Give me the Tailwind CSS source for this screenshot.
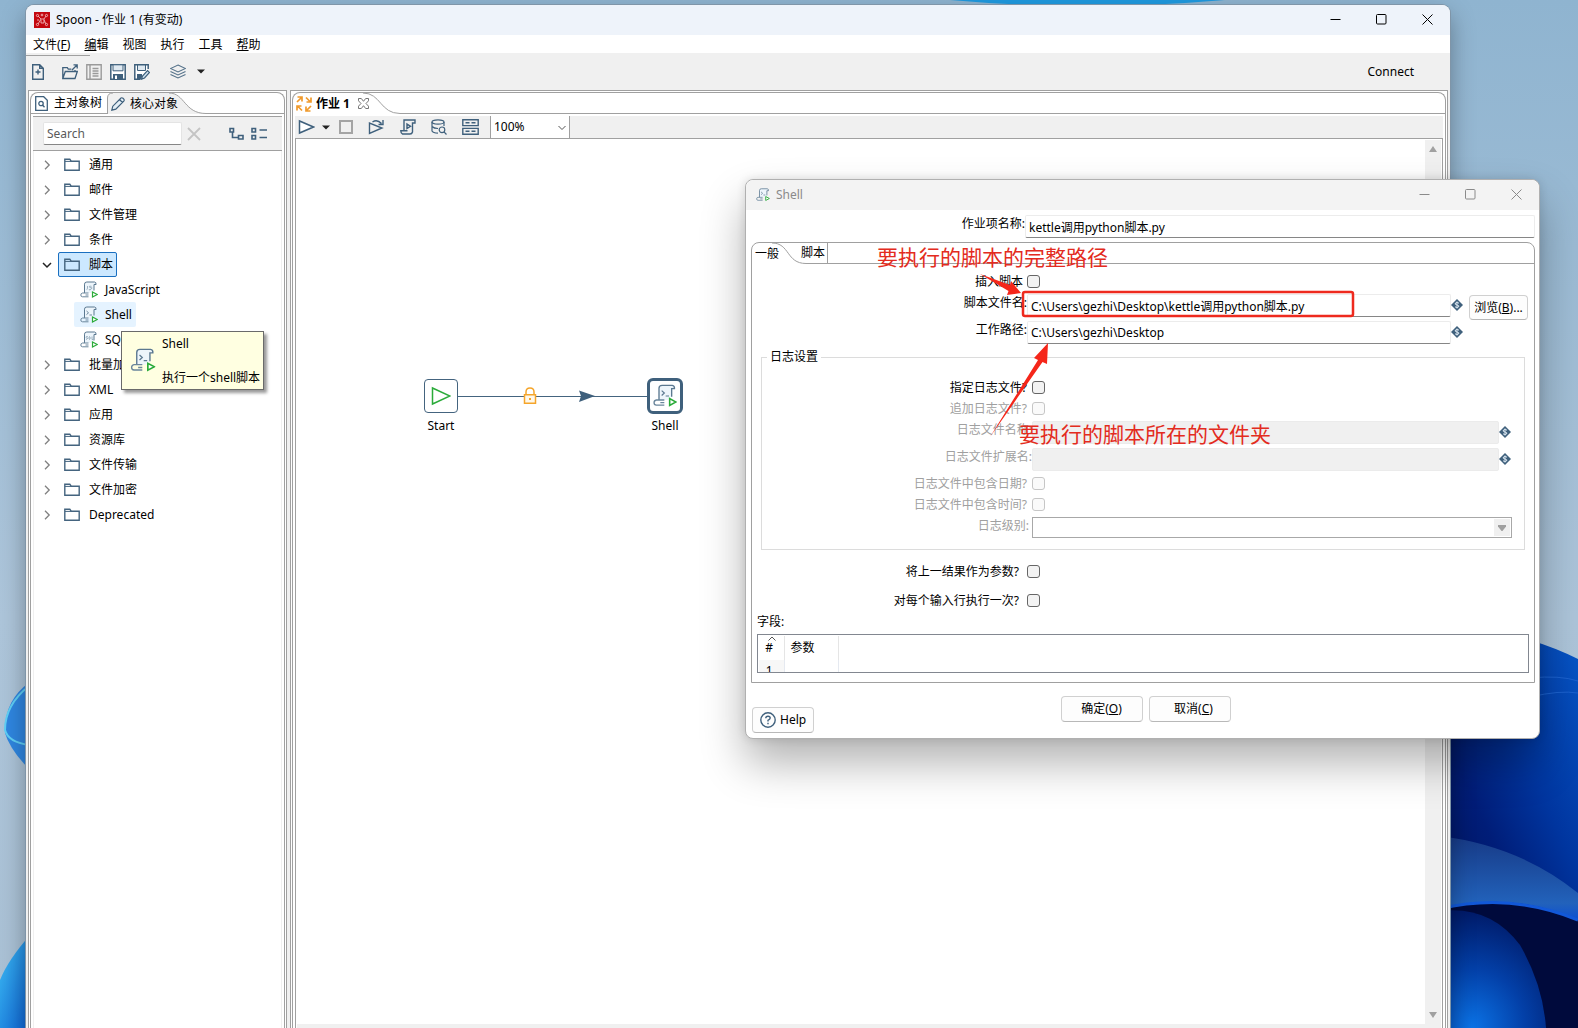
<!DOCTYPE html>
<html lang="zh-CN">
<head>
<meta charset="utf-8">
<meta name="viewport" content="width=device-width, initial-scale=1">
<title>Spoon - 作业 1 (有变动)</title>
<script src="https://cdn.jsdelivr.net/npm/@tailwindcss/browser@4"></script>
</head>
<body class="relative h-screen overflow-hidden bg-[#9bbad3] font-['Noto_Sans','Noto_Sans_CJK_SC',sans-serif] text-xs leading-4 text-black">

<!-- Shared icons -->
<svg class="hidden" aria-hidden="true">
  <symbol id="folder" viewBox="0 0 16 16"><path d="M.8 13.200V2.200h5l1.400 2h8v9z" fill="none" stroke="#44647f" stroke-width="1.400"/><path d="M1 4.400h6" stroke="#44647f"/></symbol>
  <symbol id="scroll" viewBox="0 0 18 18"><path d="M4.500 12V3.200Q4.500 1 6.800 1H14.500Q16.300 1.200 16.100 3.500H14V9.500L11 12z" fill="#edf5fb"/><path d="M4.500 12V3.200Q4.500 1 6.800 1H14.500Q16.300 1.200 16.100 3.500H14V9.500" fill="none" stroke="#5b7890" stroke-width="1"/><path d="M8.500 12H2.500Q.8 12.300.8 14T2.500 15.800H8.500M5.500 14H8.500" fill="none" stroke="#6a869c" stroke-width="1"/><path d="M12.500 11V16L17.200 13.500z" fill="#fff" stroke="#2bab3a" stroke-width="1.200"/></symbol>
  <symbol id="prompt" viewBox="0 0 18 18"><path d="M6.500 5l2 1.800-2 1.800M9.500 9h2.500" fill="none" stroke="#5b7890" stroke-width=".9"/></symbol>
  <symbol id="right" viewBox="0 0 10 10"><path d="M3 .8 7.200 5 3 9.200" fill="none" stroke="#808080" stroke-width="1.300"/></symbol>
  <symbol id="var" viewBox="0 0 12 12"><path d="M6 0l6 6-6 6-6-6z" fill="#3f607c"/><path d="M8 4.200Q6 2.800 4.500 4T6 6 7.500 8 4 7.800M6 2.500v7" fill="none" stroke="#dce8f2" stroke-width="1"/></symbol>
  <symbol id="caret" viewBox="0 0 8 5"><path d="M0 .5h8L4 4.500z" fill="#222"/></symbol>
</svg>

<!-- Wallpaper -->
<svg class="absolute inset-0 h-full w-full" viewBox="0 0 1578 1028" preserveAspectRatio="none" aria-hidden="true">
  <defs>
    <linearGradient id="sky" x1="0" y1="0" x2="0" y2="1"><stop offset="0" stop-color="#8fb4d0"/><stop offset=".6" stop-color="#adc5da"/><stop offset="1" stop-color="#a9c0d4"/></linearGradient>
    <linearGradient id="deep" x1="1" y1="0" x2="0" y2="1"><stop offset="0" stop-color="#0756c8"/><stop offset=".3" stop-color="#00359f"/><stop offset=".5" stop-color="#001d78"/><stop offset="1" stop-color="#000b40"/></linearGradient>
    <linearGradient id="mid" x1="0" y1="0" x2="0" y2="1"><stop offset="0" stop-color="#173a86"/><stop offset=".8" stop-color="#2262bb"/><stop offset="1" stop-color="#0d50d2"/></linearGradient>
    <radialGradient id="low" cx=".3" cy="1" r="1"><stop offset="0" stop-color="#0b73e6"/><stop offset=".5" stop-color="#0340a8"/><stop offset="1" stop-color="#001a68"/></radialGradient>
    <linearGradient id="petal" x1="0" y1="0" x2="1" y2="1"><stop offset="0" stop-color="#3fc0f5"/><stop offset="1" stop-color="#0c5fd2"/></linearGradient>
  </defs>
  <rect width="1578" height="1028" fill="url(#sky)"/>
  <path d="M950 0Q1085 12 1225 0z" fill="#1f9ae0"/>
  <path d="M1400 640H1530Q1556 648 1578 659V1028H1400z" fill="url(#deep)"/>
  <path d="M1530 678Q1560 675 1578 681M1530 697Q1560 690 1578 693" fill="none" stroke="#1c62cf"/>
  <path d="M1440 836Q1520 846 1578 893V920Q1500 895 1440 910z" fill="url(#mid)"/>
  <path d="M1440 909Q1510 890 1578 920V1028H1440z" fill="#000a3c"/>
  <path d="M1440 909Q1510 892 1578 920" fill="none" stroke="#1258d8" stroke-width="3"/>
  <path d="M1440 911Q1490 905 1520 945 1543 985 1546 1028H1440z" fill="url(#low)"/>
  <path d="M30 682Q4 700 5 733 10 750 30 770z" fill="#2f86e0"/>
  <path d="M29 686Q5 705 5 730 8 742 29 745" fill="none" stroke="#5fcff5" stroke-width="2"/>
  <path d="M30 935Q8 960 0 980V1028H30z" fill="url(#petal)"/>
</svg>

<!-- Main window -->
<main class="absolute top-[5px] right-[128px] bottom-0 left-[26px] flex flex-col overflow-hidden rounded-t-lg bg-[#f0f0f0] shadow-[0_0_0_1px_#7f95a8,0_10px_24px_rgba(0,0,0,0.35)]">
  <header class="flex h-[30px] shrink-0 items-center bg-[#eef3fa] pl-2">
    <svg class="mr-[6px] h-4 w-4" viewBox="0 0 16 16"><path d="M0 0h16v16H0z" fill="#c4070f"/><path d="M4 4l3 3h3l2-3M7 7l-3 5M10 8l2 4M7 8v3h3V7M5 8H3" fill="none" stroke="#f6c9cb" stroke-width=".8"/><g fill="#c4070f" stroke="#f6c9cb" stroke-width=".8"><circle cx="3.500" cy="3.500" r="1.100"/><circle cx="8" cy="3" r=".9"/><circle cx="12.500" cy="3.500" r="1.100"/><circle cx="3.500" cy="12.500" r="1.100"/><circle cx="12.500" cy="12.500" r="1.100"/></g></svg>
    <h1 class="flex-1">Spoon - 作业 1 (有变动)</h1>
    <button class="grid h-full w-[46px] place-items-center" aria-label="最小化"><svg class="h-[11px] w-[11px]" viewBox="0 0 11 11"><path d="M.5 4.500h10" stroke="#000"/></svg></button>
    <button class="grid h-full w-[46px] place-items-center pb-px" aria-label="最大化"><svg class="h-[11px] w-[11px]" viewBox="0 0 11 11"><rect x=".5" y=".5" width="9.500" height="9.500" rx="1" fill="none" stroke="#000"/></svg></button>
    <button class="grid h-full w-[46px] place-items-center pb-px" aria-label="关闭"><svg class="h-[11px] w-[11px]" viewBox="0 0 11 11"><path d="M.5.5l10 10M10.500.5l-10 10" stroke="#000"/></svg></button>
  </header>

  <nav class="flex h-[18px] shrink-0 items-center gap-[14px] bg-white pt-px pl-[7px]">
    <button>文件(<u>F</u>)</button><button><u>编</u>辑</button><button>视图</button><button>执行</button><button>工具</button><button><u>帮</u>助</button>
  </nav>

  <div class="relative flex h-[37px] shrink-0 items-center pl-1">
    <div class="absolute top-0.5 left-0 h-px w-16 bg-[#a0a0a0]"></div>
    <button class="mr-4" aria-label="新建"><svg class="h-4 w-4" viewBox="0 0 16 16" fill="none" stroke="#3f607c" stroke-width="1.400"><path d="M2.700.7h7l3.600 3.600v11H2.700zM9.700.7v3.600h3.600M8 5.500v5M5.500 8h5"/></svg></button>
    <button class="mr-2" aria-label="打开"><svg class="h-4 w-4" viewBox="0 0 16 16" fill="none" stroke="#3f607c" stroke-width="1.300"><path d="M.8 14.500V3.700h4.500l1 1.500h3M.8 14.500l2.500-7h12l-2.300 7zM13 7.500V6M10 6l5-5M11.500.8h3.700v3.700"/></svg></button>
    <button class="mr-2" aria-label="探索资源库"><svg class="h-4 w-4" viewBox="0 0 16 16" fill="none" stroke="#9a9a9a" stroke-width="1.400"><path d="M.8.8h14.400v14.400H.8zM4 .8v14.400M6.500 4.500h6M6.500 7h6M6.500 9.500h6M6.500 12h6"/></svg></button>
    <button class="mr-2" aria-label="保存"><svg class="h-4 w-4" viewBox="0 0 16 16"><path d="M.8.8h14.400v14.400H.8z" fill="#fff" stroke="#3f607c" stroke-width="1.500"/><path d="M3 .8h10v6H3z" fill="#dfe9f1" stroke="#3f607c"/><path d="M3 10h10v5.500H3z" fill="#3f607c"/><path d="M5 11.500h2V15H5z" fill="#fff"/></svg></button>
    <button class="mr-5" aria-label="另存为"><svg class="h-4 w-4" viewBox="0 0 16 16"><path d="M6 15.200H.8V.8h13.400V5" fill="#fff" stroke="#3f607c" stroke-width="1.500"/><path d="M3.500 1h8v5.500h-8z" fill="#dfe9f1" stroke="#3f607c"/><path d="M3 10h5v3l-1 2.500H3z" fill="#3f607c"/><path d="M7.500 15.200l1-3.200 5-5.500 2 2-5 5.500z" fill="#cfe2ef" stroke="#3f607c" stroke-width="1.200"/></svg></button>
    <button class="flex items-center gap-[11px]" aria-label="透视图"><svg class="h-4 w-4" viewBox="0 0 16 16" fill="none" stroke="#55728a" stroke-width="1.100"><path d="M8 1l7.500 3.500L8 8 .5 4.500zM.5 7.500L8 11l7.500-3.500M.5 10.500L8 14l7.500-3.500"/></svg><svg class="h-[5px] w-2"><use href="#caret"/></svg></button>
    <button class="mr-9 ml-auto pt-px">Connect</button>
  </div>

  <div class="flex min-h-0 flex-1 gap-[3px] pr-0.5 pl-0.5">

    <!-- Object explorer -->
    <aside class="flex w-[259px] shrink-0 flex-col border border-b-0 border-[#a0a0a0] bg-white px-px pt-px">
      <div class="flex min-h-0 flex-1 flex-col rounded-t-lg border border-b-0 border-[#a0a0a0]">
        <div class="flex h-[21px] shrink-0" role="tablist">
          <button role="tab" aria-selected="false" class="flex w-[76px] items-center gap-[6px] border-b border-[#a0a0a0] pl-1 whitespace-nowrap"><svg class="h-[15px] w-[13px] shrink-0" viewBox="0 0 13 15" fill="none" stroke="#3f607c" stroke-width="1.300"><path d="M.7.7h8l3.600 3.600v10H.7z"/><circle cx="6" cy="7.500" r="2.200"/><path d="M7.500 9l2 2.200"/></svg>主对象树</button>
          <button role="tab" aria-selected="true" class="relative flex w-[99px] items-center gap-[5px] pl-[4px] whitespace-nowrap">
            <svg class="absolute inset-0 h-[21px] w-[99px]" viewBox="0 0 99 21"><path d="M.5 21V5Q.5 0 6 0H62C78 0 77 20.500 98 20.500L99 21z" fill="#f0f0f0"/><path d="M.5 21V5Q.5 0 6 0M62 0C78 0 77 20.500 99 20.500" fill="none" stroke="#a0a0a0"/></svg>
            <svg class="relative h-[14px] w-[14px] shrink-0" viewBox="0 0 14 14" fill="#e4eef5" stroke="#3f607c" stroke-width="1.200"><path d="M.8 13.200l1-4L10 1q1-.6 2 .3l.8.800q.8 1 0 2L4.800 12.200zM8.500 2.500l3 3"/></svg><span class="relative">核心对象</span></button>
          <div class="flex-1 border-b border-[#a0a0a0]"></div>
        </div>
        <div class="mx-0.5 mt-0.5 flex h-[35px] shrink-0 items-center border-y border-[#a0a0a0] bg-[#f0f0f0] pl-[10px]">
          <input type="text" placeholder="Search" aria-label="搜索" class="h-[23px] w-[139px] rounded-xs border border-[#e4e4e4] border-b-[#868686] bg-white px-[3px] placeholder:text-[#5a5a5a]">
          <button class="ml-1" aria-label="清除"><svg class="h-4 w-4" viewBox="0 0 16 16"><path d="M2 2l12 12M14 2L2 14" stroke="#c4c4c4" stroke-width="1.800"/></svg></button>
          <button class="ml-[27px]" aria-label="展开全部"><svg class="h-[14px] w-[15px]" viewBox="0 0 15 14" fill="none" stroke="#3f607c" stroke-width="1.600"><path d="M1 1.500h3.500V5H1zM9.500 8.500H14V12H9.500zM3.500 5V10.500h6"/></svg></button>
          <button class="ml-[7px]" aria-label="收起全部"><svg class="h-[14px] w-[17px]" viewBox="0 0 17 14" fill="none" stroke="#3f607c" stroke-width="1.600"><path d="M1 1.500h3.500V5H1zM1 8.500h3.500V12H1zM8.500 3H16M8.500 10.500H16"/></svg></button>
        </div>
        <ul class="mx-0.5 flex-1 border-x border-[#f0f0f0] pt-px">
          <li class="flex h-[25px] items-center pl-2"><svg class="mr-[7px] h-[10px] w-[10px]"><use href="#right"/></svg><span class="flex h-full items-center gap-[9px] px-[5px]"><svg class="h-4 w-4"><use href="#folder"/></svg>通用</span></li>
          <li class="flex h-[25px] items-center pl-2"><svg class="mr-[7px] h-[10px] w-[10px]"><use href="#right"/></svg><span class="flex h-full items-center gap-[9px] px-[5px]"><svg class="h-4 w-4"><use href="#folder"/></svg>邮件</span></li>
          <li class="flex h-[25px] items-center pl-2"><svg class="mr-[7px] h-[10px] w-[10px]"><use href="#right"/></svg><span class="flex h-full items-center gap-[9px] px-[5px]"><svg class="h-4 w-4"><use href="#folder"/></svg>文件管理</span></li>
          <li class="flex h-[25px] items-center pl-2"><svg class="mr-[7px] h-[10px] w-[10px]"><use href="#right"/></svg><span class="flex h-full items-center gap-[9px] px-[5px]"><svg class="h-4 w-4"><use href="#folder"/></svg>条件</span></li>
          <li>
            <div class="flex h-[25px] items-center pl-2"><svg class="mr-[6px] h-[10px] w-[10px]" viewBox="0 0 10 10"><path d="M1 3l4 4 4-4" fill="none" stroke="#222" stroke-width="1.500"/></svg><span class="flex h-full items-center gap-[9px] rounded-xs border border-[#1a6fc0] bg-[#cce8ff] pr-[3px] pl-[5px]"><svg class="h-4 w-4"><use href="#folder"/></svg>脚本</span></div>
            <ul class="pl-[40px]">
              <li class="flex h-[25px] items-center gap-[7px] pl-[6px]"><svg class="h-[18px] w-[18px]" viewBox="0 0 18 18"><use href="#scroll"/><path d="M7.500 5v2.500q0 1-1 .8M11.500 5.300q-2.500-.6-2.200.6t2 .8-.2 1.500-2-.2" fill="none" stroke="#8aa1b3" stroke-width=".8"/></svg>JavaScript</li>
              <li class="flex h-[25px]"><span class="flex items-center gap-[7px] rounded-xs bg-[#e5f3ff] pr-[4px] pl-[6px]"><svg class="h-[18px] w-[18px]"><use href="#scroll"/><use href="#prompt"/></svg>Shell</span></li>
              <li class="flex h-[25px] items-center gap-[7px] pl-[6px]"><svg class="h-[18px] w-[18px]" viewBox="0 0 18 18"><use href="#scroll"/><path d="M7.800 5.500q-2-.4-1.700.8t1.500.8-1.600 1.500M9.500 5.500q-1.500 1.500 0 3 1.700-1.500 0-3M12 5.500v3h1.200" fill="none" stroke="#8aa1b3" stroke-width=".8"/></svg>SQL</li>
            </ul>
          </li>
          <li class="flex h-[25px] items-center pl-2"><svg class="mr-[7px] h-[10px] w-[10px]"><use href="#right"/></svg><span class="flex h-full items-center gap-[9px] px-[5px]"><svg class="h-4 w-4"><use href="#folder"/></svg>批量加载</span></li>
          <li class="flex h-[25px] items-center pl-2"><svg class="mr-[7px] h-[10px] w-[10px]"><use href="#right"/></svg><span class="flex h-full items-center gap-[9px] px-[5px]"><svg class="h-4 w-4"><use href="#folder"/></svg>XML</span></li>
          <li class="flex h-[25px] items-center pl-2"><svg class="mr-[7px] h-[10px] w-[10px]"><use href="#right"/></svg><span class="flex h-full items-center gap-[9px] px-[5px]"><svg class="h-4 w-4"><use href="#folder"/></svg>应用</span></li>
          <li class="flex h-[25px] items-center pl-2"><svg class="mr-[7px] h-[10px] w-[10px]"><use href="#right"/></svg><span class="flex h-full items-center gap-[9px] px-[5px]"><svg class="h-4 w-4"><use href="#folder"/></svg>资源库</span></li>
          <li class="flex h-[25px] items-center pl-2"><svg class="mr-[7px] h-[10px] w-[10px]"><use href="#right"/></svg><span class="flex h-full items-center gap-[9px] px-[5px]"><svg class="h-4 w-4"><use href="#folder"/></svg>文件传输</span></li>
          <li class="flex h-[25px] items-center pl-2"><svg class="mr-[7px] h-[10px] w-[10px]"><use href="#right"/></svg><span class="flex h-full items-center gap-[9px] px-[5px]"><svg class="h-4 w-4"><use href="#folder"/></svg>文件加密</span></li>
          <li class="flex h-[25px] items-center pl-2"><svg class="mr-[7px] h-[10px] w-[10px]"><use href="#right"/></svg><span class="flex h-full items-center gap-[9px] px-[5px]"><svg class="h-4 w-4"><use href="#folder"/></svg>Deprecated</span></li>
        </ul>
      </div>
    </aside>

    <!-- Job editor -->
    <section class="flex min-w-0 flex-1 flex-col border border-b-0 border-[#a0a0a0] bg-white px-px pt-px">
      <div class="flex min-h-0 flex-1 flex-col rounded-t-lg border border-b-0 border-[#a0a0a0]">
        <div class="flex h-[21px] shrink-0" role="tablist">
          <div class="relative flex w-[107px] items-center pl-[3px]">
            <svg class="absolute inset-0 h-[21px] w-[107px]" viewBox="0 0 107 21"><path d="M70 0C88 0 87 20.500 107 20.500" fill="none" stroke="#a0a0a0"/></svg>
            <svg class="mr-[4px] h-4 w-4 shrink-0" viewBox="0 0 16 16" fill="none" stroke="#f09a2c" stroke-width="1.700"><path d="M1 6l4.500-4.500M1.500 1H6v4.500M10 1.500L14.500 6M15 1.500V6h-4.500M15 10l-4.500 4.500M14.500 15H10v-4.500M6 14.500L1.500 10M1 14.500V10h4.500"/></svg>
            <button role="tab" aria-selected="true" class="font-bold whitespace-nowrap">作业 1</button>
            <button class="relative ml-2" aria-label="关闭标签"><svg class="h-[11px] w-[11px]" viewBox="0 0 11 11" fill="none" stroke="#666" stroke-width=".9"><path d="M.5.5h2.800l2.200 2.800L7.700.5h2.800v2.300L8 5.500l2.500 2.700v2.300H7.700L5.500 7.700l-2.200 2.800H.5V8.200L3 5.500.5 2.800z"/></svg></button>
          </div>
          <div class="flex-1 border-b border-[#a0a0a0]"></div>
        </div>
        <div class="mx-0.5 mt-0.5 flex h-[22px] shrink-0 items-center bg-[#f0f0f0] pl-[3px]">
          <button class="flex items-center gap-[7px]" aria-label="运行"><svg class="h-4 w-[17px]" viewBox="0 0 17 16"><path d="M1.500 2v12l14-6z" fill="#fff" stroke="#3f607c" stroke-width="1.500"/></svg><svg class="h-[5px] w-2"><use href="#caret"/></svg></button>
          <button class="ml-[9px] h-[14px] w-[14px] border-2 border-[#a4a4a4]" aria-label="停止"></button>
          <button class="ml-[15px]" aria-label="重放"><svg class="h-4 w-[17px]" viewBox="0 0 17 16" fill="none" stroke="#3f607c" stroke-width="1.400"><path d="M1.500 4v10.500L14 9zM4.500 3Q9-.2 13.500 4.500M15 1v4.500H10.500"/></svg></button>
          <button class="ml-[15px]" aria-label="查看脚本"><svg class="h-4 w-4" viewBox="0 0 16 16" fill="none" stroke="#3f607c" stroke-width="1.400"><path d="M4 11V1h11v3h-2.500v9q-.5 2-2.500 2H2.500Q.8 14.500.8 11.800H7.500M7 5v4.500l3.500-2.200z"/></svg></button>
          <button class="ml-[15px]" aria-label="浏览数据库"><svg class="h-4 w-4" viewBox="0 0 16 16" fill="none" stroke="#3f607c" stroke-width="1.200"><ellipse cx="7" cy="3" rx="6" ry="2.200"/><path d="M1 3v9q1 2 6 2.200M13 3v4M1 7.500Q3 9.500 7 9.500"/><circle cx="11" cy="10.800" r="2.800"/><path d="M13 12.800l2.500 2.700"/></svg></button>
          <button class="ml-[15px]" aria-label="显示结果"><svg class="h-4 w-[17px]" viewBox="0 0 17 16" fill="none" stroke="#3f607c" stroke-width="1.400"><path d="M.8.800h15.400v5.800H.8zM.8 9.400h15.400v5.800H.8zM3.500 3.700h4M9.500 3.700h4M3.500 12.300h4M9.500 12.300h4"/></svg></button>
          <div class="relative ml-[11px] h-full w-[80px]">
            <select aria-label="缩放" class="h-full w-full appearance-none border-x border-[#a0a0a0] bg-white pl-[3px]"><option>100%</option></select>
            <svg class="pointer-events-none absolute top-2 right-[4px] h-2 w-2" viewBox="0 0 8 8"><path d="M.5 2L4 5.500 7.500 2" fill="none" stroke="#555"/></svg>
          </div>
        </div>
        <div class="mx-0.5 flex min-h-0 flex-1 flex-col border border-b-0 border-[#a0a0a0]">
          <div class="flex min-h-0 flex-1">
            <!-- Job diagram -->
            <div class="relative flex-1">
              <svg class="absolute top-[240px] left-[162px] h-[34px] w-[190px]" viewBox="0 0 190 34"><path d="M0 17.500h190" stroke="#44647f"/><path d="M121 11.500l16 5.500-16 6 2-6z" fill="#3f607c"/><path d="M68 16v-3q0-4 4-4t4 4v3" fill="none" stroke="#f5a52a" stroke-width="1.500"/><path d="M66.500 15.800h11v8.500h-11z" fill="#fff8ea" stroke="#f5a52a" stroke-width="1.500"/><path d="M71 19h2v2h-2z" fill="#f5a52a"/></svg>
              <figure class="absolute top-[240px] left-[128px] flex w-[34px] flex-col items-center">
                <div class="grid h-[34px] w-[34px] place-items-center rounded border border-[#44647f] bg-white"><svg class="h-5 w-5" viewBox="0 0 20 20"><path d="M1.500 2v16L19 10z" fill="#fff" stroke="#2bab3a" stroke-width="1.500"/></svg></div>
                <figcaption class="mt-[5px]">Start</figcaption>
              </figure>
              <figure class="absolute top-[239px] left-[351px] flex w-[36px] flex-col items-center">
                <div class="grid h-[36px] w-[36px] place-items-center rounded-md border-3 border-[#3f607c] bg-white"><svg class="h-6 w-6" viewBox="0 0 18 18"><use href="#scroll"/><use href="#prompt"/></svg></div>
                <figcaption class="mt-1">Shell</figcaption>
              </figure>
            </div>
            <div class="mx-px mt-px flex w-4 flex-col items-center justify-between bg-[#f0f0f0] py-[6px]">
              <svg class="h-[6px] w-2" viewBox="0 0 8 6"><path d="M4 0l4 6H0z" fill="#a0a0a0"/></svg>
              <svg class="h-[6px] w-2" viewBox="0 0 8 6"><path d="M0 0h8L4 6z" fill="#a0a0a0"/></svg>
            </div>
          </div>
          <div class="mx-px h-[4px] bg-[#f0f0f0]"></div>
        </div>
      </div>
    </section>
  </div>
</main>

<!-- Tree tooltip -->
<div role="tooltip" class="absolute top-[331px] left-[121px] flex h-[59px] w-[143px] items-center gap-1 border border-[#6a6a6a] bg-[#ffffe1] pl-[8px] whitespace-nowrap shadow-[3px_3px_3px_rgba(0,0,0,0.4)]">
  <svg class="h-[25px] w-[26px] shrink-0" viewBox="0 0 18 18"><use href="#scroll"/><use href="#prompt"/></svg>
  <div class="flex flex-col gap-[18px] pl-[2px]"><span>Shell</span><span>执行一个shell脚本</span></div>
</div>

<!-- Shell job entry dialog -->
<section role="dialog" aria-label="Shell" class="absolute top-[179px] right-[38px] w-[795px] rounded-lg border border-[#b0b0b0] bg-white pb-[5px] shadow-[0_24px_44px_rgba(0,0,0,0.3),0_0_10px_rgba(0,0,0,0.12)]">
  <header class="flex h-[30px] items-center rounded-t-lg bg-[#f3f3f3] pl-[10px] text-[#8a8a8a]">
    <svg class="mr-[6px] h-[14px] w-[14px]" viewBox="0 0 18 18"><use href="#scroll"/><use href="#prompt"/></svg>
    <h2 class="flex-1">Shell</h2>
    <button class="grid h-full w-[46px] place-items-center" aria-label="最小化"><svg class="h-[11px] w-[11px]" viewBox="0 0 11 11"><path d="M.5 4.500h10" stroke="#8a8a8a"/></svg></button>
    <button class="grid h-full w-[46px] place-items-center pb-px" aria-label="最大化"><svg class="h-[11px] w-[11px]" viewBox="0 0 11 11"><rect x=".5" y=".5" width="9.500" height="9.500" rx="1" fill="none" stroke="#8a8a8a"/></svg></button>
    <button class="grid h-full w-[46px] place-items-center pb-px" aria-label="关闭"><svg class="h-[11px] w-[11px]" viewBox="0 0 11 11"><path d="M.5.5l10 10M10.500.5l-10 10" stroke="#8a8a8a"/></svg></button>
  </header>

  <form>
    <div class="flex pt-[5px] pr-[4px]">
      <label for="name" class="w-[279px] pt-px text-right">作业项名称:</label>
      <input id="name" type="text" value="kettle调用python脚本.py" class="h-[23px] min-w-0 flex-1 rounded-xs border border-[#ececec] border-b-[#868686] bg-white px-[3px]">
    </div>

    <div class="mt-1 mr-[4px] ml-[5px] rounded-t-lg border border-[#a0a0a0] pb-[9px]">
      <div class="flex h-[21px]" role="tablist">
        <button type="button" role="tab" aria-selected="true" class="relative flex w-[54px] items-center pl-[3px]"><svg class="absolute inset-0 h-[21px] w-[54px]" viewBox="0 0 54 21"><path d="M20 0C38 0 34 20.500 54 20.500" fill="none" stroke="#a0a0a0"/></svg>一般</button>
        <button type="button" role="tab" aria-selected="false" class="w-[21px] flex-none border-b border-[#a0a0a0]"><span class="-ml-[7px] whitespace-nowrap">脚本</span></button>
        <div class="flex-1 border-b border-l border-[#a0a0a0]"></div>
      </div>

      <div class="mt-[7px] flex h-[21px] items-center"><label for="insert" class="w-[275px] pr-[4px] text-right">插入脚本</label><input id="insert" type="checkbox" class="h-[13px] w-[13px] appearance-none rounded-[3px] border border-[#666] bg-[#f3f3f3]"></div>
      <div class="flex h-[27px] pr-[6px]">
        <label for="file" class="h-[22px] w-[275px] text-right leading-[22px]">脚本文件名:</label>
        <input id="file" type="text" value="C:\Users\gezhi\Desktop\kettle调用python脚本.py" class="mt-0.5 h-[23px] min-w-0 flex-1 rounded-xs border border-[#ececec] border-b-[#868686] bg-white px-[3px]">
        <svg class="mt-[7px] h-3 w-3"><use href="#var"/></svg>
        <button type="button" class="mt-[3px] ml-[6px] h-[25px] w-[59px] rounded border border-[#d0d0d0] border-b-[#b8b8b8] bg-[#fdfdfd] whitespace-nowrap">浏览(<u>B</u>)...</button>
      </div>
      <div class="flex h-[27px] pr-[71px]">
        <label for="dir" class="h-[22px] w-[275px] text-right leading-[22px]">工作路径:</label>
        <input id="dir" type="text" value="C:\Users\gezhi\Desktop" class="mt-0.5 h-[23px] min-w-0 flex-1 rounded-xs border border-[#ececec] border-b-[#868686] bg-white px-[3px]">
        <svg class="mt-[7px] h-3 w-3"><use href="#var"/></svg>
      </div>

      <fieldset class="mx-[9px] mt-[3px] border border-[#dcdcdc] pb-[11px] text-[#a0a0a0]">
        <legend class="ml-[5px] px-[3px] text-black">日志设置</legend>
        <div class="mt-3 flex h-[21px] items-center text-black"><label for="log" class="w-[270px] pr-[5px] text-right">指定日志文件?</label><input id="log" type="checkbox" class="h-[13px] w-[13px] appearance-none rounded-[3px] border border-[#666] bg-[#f3f3f3]"></div>
        <div class="flex h-[21px] items-center"><label for="append" class="w-[270px] pr-[5px] text-right">追加日志文件?</label><input id="append" type="checkbox" disabled class="h-[13px] w-[13px] appearance-none rounded-[3px] border border-[#c6c6c6] bg-[#fafafa]"></div>
        <div class="flex h-[27px] pr-[13px]"><label for="logname" class="h-[22px] w-[270px] text-right leading-[22px]">日志文件名称:</label><input id="logname" type="text" disabled class="mt-0.5 h-[23px] min-w-0 flex-1 rounded-xs border border-[#ebebeb] bg-[#f0f0f0]"><svg class="mt-[7px] h-3 w-3"><use href="#var"/></svg></div>
        <div class="flex h-[27px] pr-[13px]"><label for="logext" class="h-[22px] w-[270px] text-right leading-[22px]">日志文件扩展名:</label><input id="logext" type="text" disabled class="mt-0.5 h-[23px] min-w-0 flex-1 rounded-xs border border-[#ebebeb] bg-[#f0f0f0]"><svg class="mt-[7px] h-3 w-3"><use href="#var"/></svg></div>
        <div class="flex h-[21px] items-center"><label for="logdate" class="w-[270px] pr-[5px] text-right">日志文件中包含日期?</label><input id="logdate" type="checkbox" disabled class="h-[13px] w-[13px] appearance-none rounded-[3px] border border-[#c6c6c6] bg-[#fafafa]"></div>
        <div class="flex h-[21px] items-center"><label for="logtime" class="w-[270px] pr-[5px] text-right">日志文件中包含时间?</label><input id="logtime" type="checkbox" disabled class="h-[13px] w-[13px] appearance-none rounded-[3px] border border-[#c6c6c6] bg-[#fafafa]"></div>
        <div class="flex pr-[12px]">
          <label for="level" class="h-[22px] w-[270px] pr-[3px] text-right leading-[22px]">日志级别:</label>
          <div class="relative mt-0.5 h-[21px] flex-1">
            <select id="level" disabled class="h-full w-full appearance-none border border-[#a8a8a8] bg-white"><option></option></select>
            <span class="pointer-events-none absolute inset-y-0.5 right-0.5 grid w-4 place-items-center bg-[#f0f0f0]"><svg class="h-[6px] w-2" viewBox="0 0 8 6"><path d="M0 0h8v1.500L4.500 6h-1L0 1.500z" fill="#a0a0a0"/></svg></span>
          </div>
        </div>
      </fieldset>

      <div class="mt-[7px] flex h-[29px] items-center"><label for="prev" class="w-[275px] pr-2 text-right">将上一结果作为参数?</label><input id="prev" type="checkbox" class="h-[13px] w-[13px] appearance-none rounded-[3px] border border-[#666] bg-[#f3f3f3]"></div>
      <div class="flex h-[29px] items-center"><label for="each" class="w-[275px] pr-2 text-right">对每个输入行执行一次?</label><input id="each" type="checkbox" class="h-[13px] w-[13px] appearance-none rounded-[3px] border border-[#666] bg-[#f3f3f3]"></div>
      <h3 class="pt-px pl-[5px] leading-3">字段:</h3>
      <div class="mx-[5px] mt-[6px] h-[39px] overflow-hidden border border-[#828790] p-px">
        <table class="border-collapse">
          <thead><tr class="h-6">
            <th class="relative w-[25px] border-r border-[#e5e5e5] pr-1 font-normal">#<svg class="absolute top-0 left-[9px] h-[5px] w-2" viewBox="0 0 8 5"><path d="M.5 4.500L4 1l3.500 3.500" fill="none" stroke="#555"/></svg></th>
            <th class="w-[54px] border-r border-[#e5e5e5] pl-[6px] text-left font-normal">参数</th>
          </tr></thead>
          <tbody><tr><td class="border-r border-[#e5e9f0] bg-[#f7f7f7] pt-[3px] pr-1 text-center">1</td><td class="border-r border-[#e5e9f0]"></td></tr></tbody>
        </table>
      </div>
    </div>

    <div class="mt-3 ml-[6px] grid grid-cols-[1fr_auto_1fr] pt-px">
      <button type="button" class="mt-[11px] flex h-[26px] w-[62px] items-center gap-1 rounded border border-[#d0d0d0] border-b-[#b8b8b8] bg-[#fdfdfd] pl-[7px]"><svg class="h-4 w-4 shrink-0" viewBox="0 0 16 16" fill="none" stroke="#3f607c" stroke-width="1.400"><circle cx="8" cy="8" r="7.200"/><path d="M5.800 6.300q0-2.100 2.200-2.100t2.200 1.900Q10.200 7.300 8 8.300v1.200M8 10.800v1.500"/></svg>Help</button>
      <div class="flex items-start gap-[6px]">
        <button type="submit" class="h-[26px] w-[82px] rounded border border-[#d0d0d0] border-b-[#b8b8b8] bg-[#fdfdfd]">确定(<u>O</u>)</button>
        <button type="button" class="h-[26px] w-[82px] rounded border border-[#d0d0d0] border-b-[#b8b8b8] bg-[#fdfdfd] pl-2">取消(<u>C</u>)</button>
      </div>
    </div>
  </form>

  <!-- Callouts -->
  <svg class="pointer-events-none absolute inset-0 h-full w-full overflow-visible" aria-hidden="true">
    <rect x="277" y="112" width="330" height="24" rx="2" fill="none" stroke="#ee2a1e" stroke-width="2.500"/>
    <path d="M234 94l30 11 1-4 10 12-14 2 1.500-4z" fill="#f5261a"/>
    <path d="M244 257l48-77-4-2 14-15-1 21-4.500-2z" fill="#f5261a"/>
  </svg>
  <p class="pointer-events-none absolute top-[65px] left-[131px] text-[21px] leading-6 whitespace-nowrap text-[#e32b20]">要执行的脚本的完整路径</p>
  <p class="pointer-events-none absolute top-[242px] left-[273px] text-[21px] leading-6 whitespace-nowrap text-[#e32b20]">要执行的脚本所在的文件夹</p>
</section>
</body>
</html>
